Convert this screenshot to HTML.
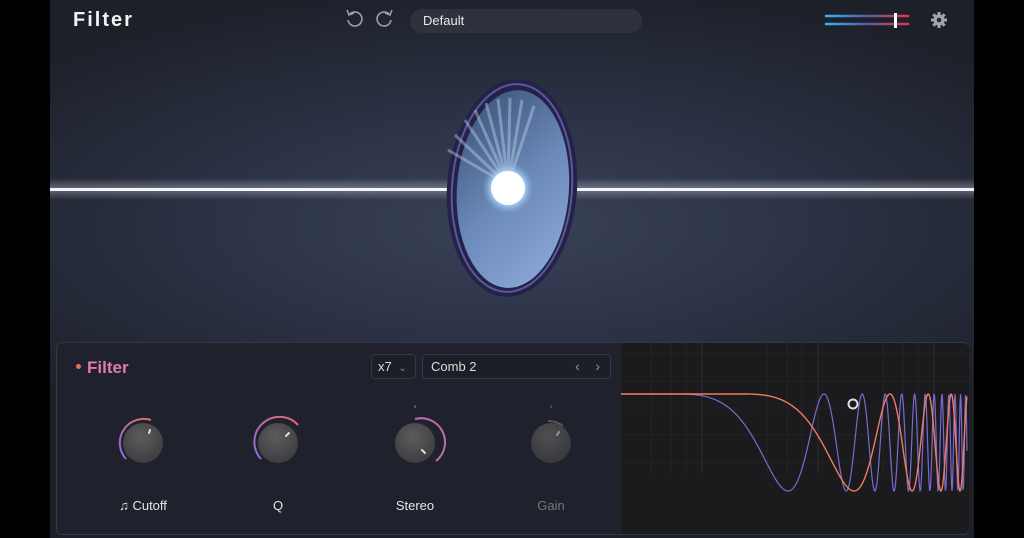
<!DOCTYPE html>
<html><head><meta charset="utf-8"><style>
*{margin:0;padding:0;box-sizing:border-box}
body{width:1024px;height:538px;background:#000;overflow:hidden;font-family:"Liberation Sans",sans-serif;position:relative}
#app{position:absolute;left:50px;top:0;width:924px;height:538px;overflow:hidden;
background:radial-gradient(ellipse 70% 45% at 50% 42%,#3a4258 0%,#2c3347 45%,#222733 80%,#1d2029 100%)}
.abs{position:absolute}
.title{left:23px;top:9px;color:#f2f2f2;font-size:20px;font-weight:bold;letter-spacing:2px}
.preset{left:360px;top:9px;width:232px;height:24px;border-radius:12px;background:#2e323c;color:#e8e8e8;font-size:13px;line-height:24px;padding-left:13px}
.panel{left:6px;top:342px;width:913px;height:193px;border-radius:6px;background:#1f222c;border:1px solid #333848}
.graph{left:571px;top:343px;width:348px;height:191px;background:#1b1b1d;border-radius:0 6px 6px 0}
.lab{color:#e6e6e6;font-size:13px;top:498px;text-align:center;width:100px}
.box{top:354px;height:25px;border:1px solid #343846;border-radius:4px;background:#1c1f27;color:#dcdcdc;font-size:13px;line-height:23px}
</style></head><body>
<div id="app">
<svg class="abs" style="left:0;top:0" width="924" height="538">
<defs>
<linearGradient id="lens" x1="0.2" y1="0" x2="0.8" y2="1">
<stop offset="0" stop-color="#3e5478"/><stop offset="0.5" stop-color="#6a88b8"/><stop offset="1" stop-color="#8aa8d8"/></linearGradient>
<radialGradient id="glow" cx="50%" cy="50%" r="50%">
<stop offset="0" stop-color="#fff"/><stop offset="0.45" stop-color="#fff"/><stop offset="0.7" stop-color="#a8d4ff" stop-opacity=".7"/><stop offset="1" stop-color="#8ab" stop-opacity="0"/></radialGradient>
<linearGradient id="beam" x1="0" y1="0" x2="0" y2="1"><stop offset="0" stop-color="#fff" stop-opacity="0"/><stop offset=".5" stop-color="#fff" stop-opacity=".3"/><stop offset="1" stop-color="#fff" stop-opacity="0"/></linearGradient>
<linearGradient id="sl1" gradientUnits="userSpaceOnUse" x1="776" y1="0" x2="858" y2="0"><stop offset="0" stop-color="#30b8f0"/><stop offset=".5" stop-color="#5a5aa0"/><stop offset="1" stop-color="#e03848"/></linearGradient>
</defs>
<rect x="0" y="178" width="924" height="22" fill="url(#beam)"/>
<rect x="0" y="188" width="924" height="3" fill="#f4f4ff"/>
<g transform="rotate(4 462 188)">
<ellipse cx="462" cy="188" rx="65" ry="109" fill="#25224a"/>
<ellipse cx="462" cy="188" rx="60" ry="104" fill="none" stroke="#5a5898" stroke-width="2"/>
<ellipse cx="463" cy="189" rx="56" ry="99" fill="url(#lens)"/>
</g>
<g stroke="#c8dcf8" stroke-width="3" opacity=".4">
<line x1="458" y1="185" x2="415" y2="120"/><line x1="458" y1="185" x2="425" y2="110"/><line x1="458" y1="185" x2="436" y2="103"/><line x1="458" y1="185" x2="448" y2="99"/><line x1="458" y1="185" x2="460" y2="98"/><line x1="458" y1="185" x2="472" y2="100"/><line x1="458" y1="185" x2="484" y2="106"/><line x1="458" y1="185" x2="405" y2="135"/><line x1="458" y1="185" x2="398" y2="150"/></g>
<circle cx="458" cy="188" r="26" fill="url(#glow)"/>
<circle cx="458" cy="188" r="17" fill="#fff"/>
<g stroke-linecap="round"><line x1="776" y1="16" x2="858" y2="16" stroke="url(#sl1)" stroke-width="2.5"/><line x1="776" y1="24" x2="858" y2="24" stroke="url(#sl1)" stroke-width="2.5"/></g>
<rect x="844" y="13" width="3" height="15" fill="#fff"/>
<g fill="none" stroke="#9a9ea8" stroke-width="1.6"><path d="M300 14 a7 7 0 1 1 -2 6"/><path d="M297 10 l2 5 l5 -2"/><path d="M339 14 a7 7 0 1 0 2 6"/><path d="M342 10 l-2 5 l-5 -2"/></g>
<g transform="translate(889,20)" fill="#a0a4ac"><circle r="5.5"/><g stroke="#a0a4ac" stroke-width="3"><line x1="-8" y1="0" x2="8" y2="0"/><line x1="0" y1="-8" x2="0" y2="8"/><line x1="-5.7" y1="-5.7" x2="5.7" y2="5.7"/><line x1="-5.7" y1="5.7" x2="5.7" y2="-5.7"/></g><circle r="2.3" fill="#23262e"/></g>
</svg>
<div class="abs title">Filter</div>
<div class="abs preset">Default</div>
<div class="abs panel"></div>
<div class="abs" style="left:26px;top:364px;width:5px;height:5px;border-radius:50%;background:#f06a5a"></div>
<div class="abs" style="left:37px;top:358px;color:#e27ab0;font-size:17px;font-weight:bold">Filter</div>
<div class="abs box" style="left:321px;width:45px;padding-left:6px">x7 <span style="color:#888;font-size:10px;margin-left:3px">&#8964;</span></div>
<div class="abs box" style="left:372px;width:189px;padding-left:8px">Comb 2<span style="position:absolute;right:10px;color:#999;font-size:14px">&#8249;&nbsp;&nbsp;&nbsp;&nbsp;&#8250;</span></div>
<svg class="abs" style="left:0;top:400px" width="571" height="90">
<defs><linearGradient id="arc" x1="0" y1="1" x2="1" y2="0"><stop offset="0" stop-color="#8a6ae0"/><stop offset="1" stop-color="#e86a6a"/></linearGradient>
<radialGradient id="kn" cx="45%" cy="35%" r="65%"><stop offset="0" stop-color="#5c5c5e"/><stop offset="1" stop-color="#3e3e40"/></radialGradient></defs>
<g fill="none" stroke="url(#arc)" stroke-width="2">
<path d="M76 59 A24 24 0 0 1 101 20"/>
<path d="M211 59 A24 24 0 0 1 248 25"/>
<path d="M365 19 A24 24 0 0 1 386 61" stroke="#c06ab0"/>
</g>
<path d="M498 21 A24 24 0 0 1 513 26" stroke="#555" stroke-width="2" fill="none"/>
<g fill="url(#kn)"><circle cx="93" cy="43" r="20"/><circle cx="228" cy="43" r="20"/><circle cx="365" cy="43" r="20"/><circle cx="501" cy="43" r="20" opacity=".8"/></g>
<g stroke="#ddd" stroke-width="2" stroke-linecap="round"><line x1="99" y1="33" x2="100" y2="30"/><line x1="236" y1="36" x2="239" y2="33"/><line x1="372" y1="50" x2="375" y2="53"/><line x1="507" y1="35" x2="509" y2="32" stroke="#999"/></g>
<line x1="365" y1="5" x2="365" y2="8" stroke="#888"/><line x1="501" y1="5" x2="501" y2="8" stroke="#666"/>
</svg>
<div class="abs lab" style="left:43px">&#9835; Cutoff</div>
<div class="abs lab" style="left:178px">Q</div>
<div class="abs lab" style="left:315px">Stereo</div>
<div class="abs lab" style="left:451px;color:#777">Gain</div>
<svg class="abs graph" width="348" height="191" id="g">
<g stroke="#232325" stroke-width="1">
<line x1="0" y1="11" x2="348" y2="11"/><line x1="0" y1="38" x2="348" y2="38"/><line x1="0" y1="65" x2="348" y2="65"/><line x1="0" y1="92" x2="348" y2="92"/><line x1="0" y1="119" x2="348" y2="119"/>
<line x1="81" y1="0" x2="81" y2="130" stroke="#2c2c2e"/><line x1="197" y1="0" x2="197" y2="130" stroke="#2c2c2e"/><line x1="313" y1="0" x2="313" y2="130" stroke="#2c2c2e"/>
<line x1="30" y1="0" x2="30" y2="130"/><line x1="50" y1="0" x2="50" y2="130"/><line x1="65" y1="0" x2="65" y2="130"/><line x1="146" y1="0" x2="146" y2="130"/><line x1="166" y1="0" x2="166" y2="130"/><line x1="181" y1="0" x2="181" y2="130"/><line x1="262" y1="0" x2="262" y2="130"/><line x1="282" y1="0" x2="282" y2="130"/><line x1="297" y1="0" x2="297" y2="130"/>
</g>
<path id="pp" fill="none" stroke="#7a6ad0" stroke-width="1.2"/>
<path id="po" fill="none" stroke="#f07a62" stroke-width="1.4"/>
<circle cx="232" cy="61" r="4.5" fill="none" stroke="#ddd" stroke-width="2"/>
</svg>
</div>
<script>
function mk(x0,s,scale){var d="";for(var x=0;x<=346;x+=0.5){var X=x+621;var u=X>x0?Math.exp((X-x0)/s)-1:0;var phi=Math.PI*u/scale;var y=51+48.5*(1-Math.cos(phi));d+=(x?"L":"M")+x+" "+y.toFixed(2);}return d;}
var s=59,sc=Math.exp(108/59)-1;
document.getElementById("pp").setAttribute("d",mk(680,s,sc));
document.getElementById("po").setAttribute("d",mk(746,s,sc));
</script>
</body></html>
